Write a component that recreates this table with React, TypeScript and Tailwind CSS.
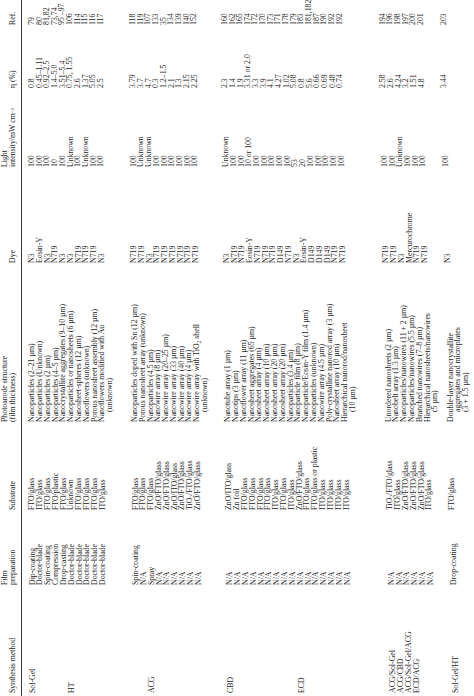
import React from "react";

type Row = {
  s?: string;
  f: string;
  sub: React.ReactNode;
  p: React.ReactNode[];
  d: string;
  l: string;
  e: string;
  r: string;
};

const Ti = (
  <>
    TiO<sub className="text-[5.4px]">2</sub>
  </>
);

const blocks: Row[][] = [
  [
    { s: "Sol-Gel", f: "Dip-coating", sub: "FTO/glass", p: ["Nanoparticles (2–21 µm)"], d: "N3", l: "100", e: "0.8", r: "79" },
    { f: "Doctor-blade", sub: "ITO/glass", p: ["Nanoparticles (Unknown)"], d: "Eosin-Y", l: "100", e: "0.45–1.11", r: "80" },
    { f: "Spin-coating", sub: "FTO/glass", p: ["Nanoparticles (2 µm)"], d: "N3", l: "100", e: "0.92–2.5", r: "81,82" },
    { f: "Compression", sub: "FTO/plastic", p: ["Nanoparticles (4–5 µm)"], d: "N719", l: "10", e: "1.4–5.0", r: "73,74" },
    { f: "Drop-casting", sub: "FTO/glass", p: ["Nanocrystallite aggregates (9–10 µm)"], d: "N3", l: "100", e: "3.51–5.4", r: "95 –97" },
    { s: "HT", f: "Doctor-blade", sub: "Unknown", p: ["Nanoparticles or nanosheets (6 µm)"], d: "N3", l: "Unknown", e: "0.75, 1.55", r: "106" },
    { f: "Doctor-blade", sub: "FTO/glass", p: ["Nanosheet-spheres (12 µm)"], d: "N719", l: "100", e: "2.6", r: "114" },
    { f: "Doctor-blade", sub: "FTO/glass", p: ["Nanoflowers (unknown)"], d: "N719", l: "Unknown", e: "1.37", r: "115" },
    { f: "Doctor-blade", sub: "FTO/glass", p: ["Porous nanosheet assembly (12 µm)"], d: "N719", l: "100", e: "5.05", r: "116" },
    { f: "Doctor-blade", sub: "ITO/glass", p: ["Nanoflowers modified with Au", "(unknown)"], d: "N3", l: "100", e: "2.5", r: "117" },
  ],
  [
    { f: "Spin-coating", sub: "FTO/glass", p: ["Nanoparticles doped with Sn (12 µm)"], d: "N719", l: "100", e: "3.79", r: "118" },
    { f: "N/A", sub: "FTO/glass", p: ["Porous nanosheet array (unknown)"], d: "N719", l: "Unknown", e: "3.7", r: "119" },
    { s: "ACG", f: "Spray", sub: "FTO/glass", p: ["Nanoparticles (4.5 µm)"], d: "N3", l: "Unknown", e: "4.7", r: "107" },
    { f: "N/A", sub: "ZnO/FTO/glass", p: ["Nanowire array (8 µm)"], d: "N719", l: "100", e: "0.3", r: "133" },
    { f: "N/A", sub: "ZnO/FTO/glass", p: ["Nanowire array (20–25 µm)"], d: "N719", l: "100", e: "1.2–1.5", r: "35" },
    { f: "N/A", sub: "ZnO/ITO/glass", p: ["Nanowire array (33 µm)"], d: "N719", l: "100", e: "2.1", r: "134" },
    { f: "N/A", sub: "ZnO/FTO/glass", p: ["Nanowire array (40 µm)"], d: "N719", l: "100", e: "1.3", r: "139" },
    { f: "N/A", sub: <>{Ti}/FTO/glass</>, p: ["Nanowire array (4 µm)"], d: "N719", l: "100", e: "2.15", r: "140" },
    { f: "N/A", sub: "ZnO/FTO/glass", p: [<>Nanowire array with {Ti} shell</>, "(unknown)"], d: "N719", l: "100", e: "2.25", r: "152" },
  ],
  [
    { s: "CBD", f: "N/A", sub: "ZnO/ITO/glass", p: ["Nanotube array (1 µm)"], d: "N3", l: "Unknown", e: "2.3", r: "160" },
    { f: "N/A", sub: "Zn foil", p: ["Nanotips (3 µm)"], d: "N719", l: "100", e: "1.4", r: "162" },
    { f: "N/A", sub: "FTO/glass", p: ["Nanoflower array (11 µm)"], d: "N719", l: "100", e: "1.9", r: "165" },
    { f: "N/A", sub: "FTO/glass", p: ["Nanosheet aggregates (65 µm)"], d: "Eosin-Y", l: "10 or 100", e: "3.31 or 2.0", r: "174" },
    { f: "N/A", sub: "FTO/glass", p: ["Nanosheet array (4 µm)"], d: "N719", l: "100", e: "3.3", r: "172" },
    { f: "N/A", sub: "FTO/glass", p: ["Nanosheet array (10 µm)"], d: "N719", l: "100", e: "3.9", r: "170" },
    { f: "N/A", sub: "ITO/glass", p: ["Nanosheet array (20 µm)"], d: "N719", l: "100", e: "4.1", r: "173" },
    { f: "N/A", sub: "FTO/glass", p: ["Nanosheet array (20 µm)"], d: "D149", l: "100", e: "4.27", r: "171" },
    { f: "N/A", sub: "ITO/glass", p: ["Nanoparticles (3.4 µm)"], d: "N719", l: "100", e: "1.02", r: "178" },
    { s: "ECD", f: "N/A", sub: "ZnO/FTO/glass", p: ["Nanoparticle film (8 µm)"], d: "N3", l: "53", e: "5.08", r: "179" },
    { f: "N/A", sub: "FTO/glass", p: ["Nanoparticle/Eosin-Y film (1.4 µm)"], d: "Eosin-Y", l: "20", e: "0.8", r: "183" },
    { f: "N/A", sub: "FTO/glass or plastic", p: ["Nanoparticles (unknown)"], d: "D149", l: "100", e: "5.6", r: "181,182" },
    { f: "N/A", sub: "ITO/glass", p: ["Nanowire array (4.5 µm)"], d: "D149", l: "100", e: "0.66", r: "187" },
    { f: "N/A", sub: "ITO/glass", p: ["Poly-crystalline nanorod array (3 µm)"], d: "D149", l: "100", e: "0.69", r: "190" },
    { f: "N/A", sub: "ITO/glass", p: ["Nanosheet array (10 µm)"], d: "N719", l: "100", e: "0.48", r: "192" },
    { f: "N/A", sub: "ITO/glass", p: ["Hierarchical nanorod/nanosheet", "(10 µm)"], d: "N719", l: "100", e: "0.74", r: "192" },
  ],
  [
    { s: "ACG/Sol-Gel", f: "N/A", sub: <>{Ti}/FTO/glass</>, p: ["Unordered nanosheets (2 µm)"], d: "N719", l: "100", e: "2.58", r: "194" },
    { s: "ACG/CBD", f: "N/A", sub: "ITO/glass", p: ["Nanobelt array (1.3 µm)"], d: "N719", l: "100", e: "2.6", r: "196" },
    { s: "ACG/Sol-Gel/ACG", f: "N/A", sub: "ZnO/FTO/glass", p: ["Nanoparticles/nanowires (11 + 2 µm)"], d: "N3", l: "Unknown", e: "4.24", r: "198" },
    { s: "ECD/ACG", f: "N/A", sub: "ZnO/FTO/glass", p: ["Nanoparticles/nanowires (5.5 µm)"], d: "Mercurochrome", l: "100", e: "3.2", r: "197" },
    { f: "N/A", sub: "ZnO/FTO/glass", p: ["Branched nanowires (7–8 µm)"], d: "N719", l: "100", e: "1.51", r: "200" },
    { f: "N/A", sub: "ITO/glass", p: ["Hierarchical nanosheets/nanowires", "(5 µm)"], d: "N719", l: "100", e: "4.8", r: "201" },
  ],
  [
    {
      s: "Sol-Gel/HT",
      f: "Drop-coating",
      sub: "FTO/glass",
      p: ["Double-layer nanocrystallite", "aggregates and microplates", "(3 + 1.5 µm)"],
      d: "N3",
      l: "100",
      e: "3.44",
      r: "203",
    },
  ],
];

// Column geometry (in the table's own, unrotated frame)
const WIDTHS = [108, 75, 88, 159, 96, 79, 63, 25];
// The scanned page spreads rows slightly more toward its left edge.
const SPREAD = [1.027, 1.023, 1.02, 1.015, 1.009, 1.005, 1.002, 1.0];
const LINE = 7.67;
const FIRST_CENTER = 31.7;
const RULE_BOTTOM = 22;
const BLOCK_GAPS = [0, 16.9, 15.3, 27.6, 7.3];

const HEADERS: [React.ReactNode, React.ReactNode][] = [
  ["", "Synthesis method"],
  ["Film", "preparation"],
  ["", "Substrate"],
  ["Photoanode structure", "(film thickness)"],
  ["", "Dye"],
  [
    "Light",
    <>
      intensity/mW cm<sup className="text-[5px] relative -top-[1px]">−2</sup>
    </>,
  ],
  ["", "η (%)"],
  ["", "Ref."],
];

function cellValue(row: Row, k: number): React.ReactNode {
  switch (k) {
    case 0:
      return row.s ?? "";
    case 1:
      return row.f;
    case 2:
      return row.sub;
    case 4:
      return row.d;
    case 5:
      return row.l;
    case 6:
      return row.e;
    default:
      return row.r;
  }
}

function Column({ k }: { k: number }) {
  const f = SPREAD[k];
  const lh = LINE * f;
  return (
    <div
      className="flex flex-col shrink-0 whitespace-nowrap"
      style={{
        width: WIDTHS[k],
        lineHeight: `${lh}px`,
        paddingTop: FIRST_CENTER * f - lh / 2 - RULE_BOTTOM,
      }}
    >
      {blocks.map((b, bi) => (
        <div key={bi} style={{ paddingTop: BLOCK_GAPS[bi] * f }}>
          {b.map((row, ri) =>
            k === 3 ? (
              <div key={ri}>
                {row.p.map((line, i) => (
                  <div key={i} className={i > 0 ? "pl-[10px]" : ""}>
                    {line}
                  </div>
                ))}
              </div>
            ) : (
              <div key={ri} style={{ height: lh * row.p.length }}>
                {cellValue(row, k)}
              </div>
            )
          )}
        </div>
      ))}
    </div>
  );
}

export default function App() {
  return (
    <div className="w-[474px] h-[696px] overflow-hidden bg-white">
      <div className="w-[696px] h-[474px] origin-top-left [transform:translateY(696px)_rotate(-90deg)] font-['Liberation_Serif',serif] text-[7.8px] leading-[7.67px] text-[#1c1c1c] bg-white">
        <div className="grid grid-cols-[108px_75px_88px_159px_96px_79px_63px_25px] pl-[3px] whitespace-nowrap h-[21px] pt-[1.2px]">
          {HEADERS.map((c, i) => (
            <div key={i} className="flex flex-col">
              <div className="h-[7.67px]">{c[0]}</div>
              <div className="h-[7.67px]">{c[1]}</div>
            </div>
          ))}
        </div>
        <div className="h-px bg-[#3a3a3a]" />
        <div className="flex pl-[3px]">
          {WIDTHS.map((_, k) => (
            <Column key={k} k={k} />
          ))}
        </div>
      </div>
    </div>
  );
}
